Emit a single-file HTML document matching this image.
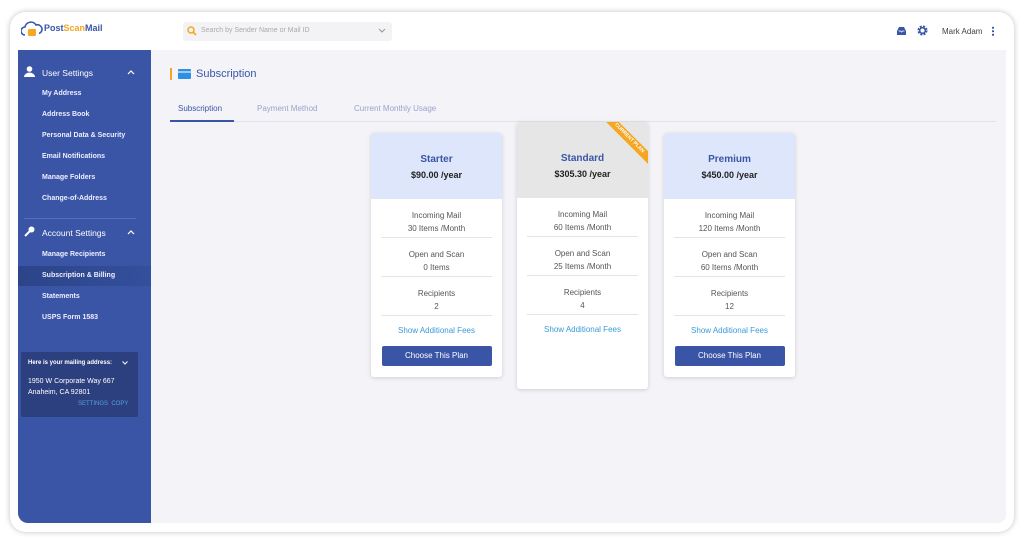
<!DOCTYPE html>
<html><head><meta charset="utf-8"><style>
*{box-sizing:border-box;margin:0;padding:0}
body{width:1024px;height:543px;background:#fff;font-family:"Liberation Sans",sans-serif;position:relative;overflow:hidden}
.frame{position:absolute;left:10px;top:12px;width:1004px;height:520px;background:#fff;border-radius:16px;box-shadow:0 0 6px rgba(0,0,0,.25)}
.side{position:absolute;left:18px;top:50px;width:133px;height:473px;background:#3a55a6;border-bottom-left-radius:10px;color:#fff}
.main{position:absolute;left:151px;top:50px;width:855px;height:473px;background:#f3f3f8;border-bottom-right-radius:8px}
.abs{position:absolute}
.item{position:absolute;left:24px;font-size:7px;font-weight:bold;color:#eef}
.hd{position:absolute;left:24px;font-size:8.5px;color:#fff}
.card{position:absolute;width:131px;background:#fff;box-shadow:0 1px 4px rgba(0,0,0,.15);border-radius:3px;text-align:center;color:#555;font-size:8px}
.top{height:66px;background:#dde6fb;border-radius:3px 3px 0 0;overflow:hidden;position:relative}
.top .n{position:absolute;top:21px;width:100%;color:#3a55a6;font-weight:bold;font-size:10px}
.top .p{position:absolute;top:37px;width:100%;color:#222;font-weight:bold;font-size:9px}
.row{margin:0 10px;border-bottom:1px solid #e4e4e4;height:39px;padding-top:11px;line-height:12.5px}
.fee{color:#3a9ad9;margin-top:10px;font-size:8px}
.btn{margin:11px auto 0;width:110px;height:20px;background:#3a55a6;color:#fff;border-radius:2px;line-height:20px;font-size:8px}
</style></head><body>
<div class="frame"></div>
<svg class="abs" style="left:21px;top:20px" width="22" height="18" viewBox="0 0 22 18"><path d="M4 15a4 4 0 0 1 0-8 6 6 0 0 1 11-2 4.5 4.5 0 0 1 3 8.5" fill="none" stroke="#3a55a6" stroke-width="1.6"/><rect x="7" y="9" width="8" height="7" rx="1" fill="#f5a623"/></svg>
<div class="abs" style="left:44px;top:23px;font-size:9px;font-weight:bold;color:#3a55a6">Post<span style="color:#f5a623">Scan</span>Mail</div>
<div class="abs" style="left:183px;top:22px;width:209px;height:19px;background:#f3f3f6;border-radius:3px"></div>
<svg class="abs" style="left:187px;top:26px" width="10" height="10" viewBox="0 0 10 10"><circle cx="4" cy="4" r="3" fill="none" stroke="#f5a623" stroke-width="1.5"/><path d="M6 6l3 3" stroke="#f5a623" stroke-width="1.6"/></svg>
<div class="abs" style="left:201px;top:27px;font-size:7px;color:#aaa">Search by Sender Name or Mail ID</div>
<svg class="abs" style="left:378px;top:28px" width="8" height="6"><path d="M1 1l3 3 3-3" fill="none" stroke="#999"/></svg>
<svg class="abs" style="left:896px;top:26px" width="11" height="10" viewBox="0 0 11 10"><path d="M1 5l2-4h5l2 4v4H1z" fill="#3a55a6"/><path d="M2.5 5h2l1 1 1-1h2" stroke="#fff" fill="none" stroke-width=".8"/></svg>
<svg class="abs" style="left:917px;top:25px" width="11" height="11" viewBox="0 0 12 12"><circle cx="6" cy="6" r="4" fill="none" stroke="#3a55a6" stroke-width="3" stroke-dasharray="2 1.2"/><circle cx="6" cy="6" r="3" fill="none" stroke="#3a55a6" stroke-width="1.6"/></svg>
<div class="abs" style="left:942px;top:27px;font-size:8px;color:#444">Mark Adam</div>
<div class="abs" style="left:992px;top:26px;width:2px;height:10px;background:radial-gradient(circle,#3a55a6 1px,transparent 1.1px) 0 0/2px 3.5px"></div>
<div class="side">
<svg class="abs" style="left:6px;top:16px" width="11" height="11" viewBox="0 0 11 11"><circle cx="5.5" cy="3" r="2.8" fill="#fff"/><path d="M0 11a5.5 4.5 0 0 1 11 0z" fill="#fff"/></svg>
<div class="hd" style="top:18px">User Settings</div>
<svg class="abs" style="left:109px;top:20px" width="8" height="5"><path d="M1 4l3-3 3 3" fill="none" stroke="#fff" stroke-width="1.2"/></svg>
<div class="item" style="top:40px">My Address</div>
<div class="item" style="top:61px">Address Book</div>
<div class="item" style="top:82px">Personal Data &amp; Security</div>
<div class="item" style="top:103px">Email Notifications</div>
<div class="item" style="top:124px">Manage Folders</div>
<div class="item" style="top:145px">Change-of-Address</div>
<div class="abs" style="left:6px;top:168px;width:112px;height:1px;background:#5870b8"></div>
<svg class="abs" style="left:6px;top:176px" width="11" height="11" viewBox="0 0 11 11"><circle cx="7.5" cy="3.5" r="3" fill="#fff"/><path d="M6 5l-5 5" stroke="#fff" stroke-width="2"/></svg>
<div class="hd" style="top:178px">Account Settings</div>
<svg class="abs" style="left:109px;top:180px" width="8" height="5"><path d="M1 4l3-3 3 3" fill="none" stroke="#fff" stroke-width="1.2"/></svg>
<div class="item" style="top:201px">Manage Recipients</div>
<div class="abs" style="left:0;top:216px;width:133px;height:20px;background:linear-gradient(90deg,#2c4488,#34509c)"></div>
<div class="item" style="top:222px">Subscription &amp; Billing</div>
<div class="item" style="top:243px">Statements</div>
<div class="item" style="top:264px">USPS Form 1583</div>
<div class="abs" style="left:3px;top:302px;width:117px;height:65px;background:#2c3f7e;border-radius:2px"></div>
<div class="abs" style="left:10px;top:310px;font-size:6px;font-weight:bold">Here is your mailing address:</div>
<svg class="abs" style="left:104px;top:311px" width="6" height="4"><path d="M.5.5l2.5 2.5 2.5-2.5" fill="none" stroke="#fff"/></svg>
<div class="abs" style="left:10px;top:326px;font-size:7px;line-height:11px">1950 W Corporate Way 667<br>Anaheim, CA 92801</div>
<div class="abs" style="left:60px;top:351px;font-size:6px;color:#55a0e0">SETTINGS&nbsp; COPY</div>
</div>
<div class="main">
<div class="abs" style="left:19px;top:18px;width:2px;height:12px;background:#f5a623"></div>
<div class="abs" style="left:27px;top:19px;width:13px;height:10px;background:#2f8fe0;border-radius:1px"><div style="margin-top:2px;height:2px;background:#9cc9f5"></div></div>
<div class="abs" style="left:45px;top:18px;font-size:11px;color:#3a55a6">Subscription</div>
<div class="abs" style="left:27px;top:54px;font-size:8px;color:#3a55a6">Subscription</div>
<div class="abs" style="left:106px;top:54px;font-size:8px;color:#9aa4cc">Payment Method</div>
<div class="abs" style="left:203px;top:54px;font-size:8px;color:#9aa4cc">Current Monthly Usage</div>
<div class="abs" style="left:19px;top:71px;width:826px;height:1px;background:#e2e2ea"></div>
<div class="abs" style="left:19px;top:70px;width:64px;height:2px;background:#3a55a6"></div>
</div>
<div class="card" style="left:371px;top:133px">
<div class="top"><div class="n">Starter</div><div class="p">$90.00 /year</div></div>
<div class="row">Incoming Mail<br>30 Items /Month</div>
<div class="row">Open and Scan<br>0 Items</div>
<div class="row">Recipients<br>2</div>
<div class="fee">Show Additional Fees</div><div class="btn">Choose This Plan</div><div style="height:11px"></div>
</div>
<div class="card" style="left:517px;top:122px;height:267px">
<div class="top" style="height:76px;background:#e6e6e6"><div class="n" style="top:31px">Standard</div><div class="p" style="top:47px">$305.30 /year</div>
<div style="position:absolute;right:-26px;top:12px;width:90px;height:9px;background:#f5a623;transform:rotate(45deg);color:#fff;font-size:5px;line-height:9px;font-weight:bold">CURRENT PLAN</div></div>
<div class="row">Incoming Mail<br>60 Items /Month</div>
<div class="row">Open and Scan<br>25 Items /Month</div>
<div class="row">Recipients<br>4</div>
<div class="fee">Show Additional Fees</div>
</div>
<div class="card" style="left:664px;top:133px">
<div class="top"><div class="n">Premium</div><div class="p">$450.00 /year</div></div>
<div class="row">Incoming Mail<br>120 Items /Month</div>
<div class="row">Open and Scan<br>60 Items /Month</div>
<div class="row">Recipients<br>12</div>
<div class="fee">Show Additional Fees</div><div class="btn">Choose This Plan</div><div style="height:11px"></div>
</div>
</body></html>
